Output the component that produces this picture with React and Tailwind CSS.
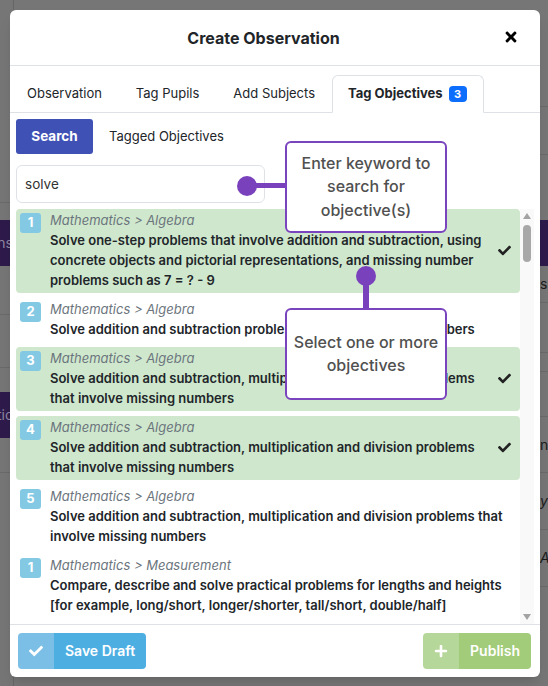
import { FaCheck, FaPlus, FaTimes } from 'react-icons/fa';

const objectives = [
  {
    num: 1,
    path: 'Mathematics > Algebra',
    text: 'Solve one-step problems that involve addition and subtraction, using concrete objects and pictorial representations, and missing number problems such as 7 = ? - 9',
    tagged: true,
  },
  {
    num: 2,
    path: 'Mathematics > Algebra',
    text: 'Solve addition and subtraction problems involving missing numbers',
    tagged: false,
  },
  {
    num: 3,
    path: 'Mathematics > Algebra',
    text: 'Solve addition and subtraction, multiplication and division problems that involve missing numbers',
    tagged: true,
  },
  {
    num: 4,
    path: 'Mathematics > Algebra',
    text: 'Solve addition and subtraction, multiplication and division problems that involve missing numbers',
    tagged: true,
  },
  {
    num: 5,
    path: 'Mathematics > Algebra',
    text: 'Solve addition and subtraction, multiplication and division problems that involve missing numbers',
    tagged: false,
  },
  {
    num: 1,
    path: 'Mathematics > Measurement',
    text: 'Compare, describe and solve practical problems for lengths and heights [for example, long/short, longer/shorter, tall/short, double/half]',
    tagged: false,
  },
  {
    num: 2,
    path: 'Mathematics > Measurement',
    text: 'Measure and begin to record lengths and heights, mass, capacity and volume, and time',
    tagged: false,
  },
];

const tabs = ['Observation', 'Tag Pupils', 'Add Subjects'];

function Backdrop() {
  return (
    <div className="flex h-full w-full text-sm text-[#1c1c1c]">
      <div className="flex w-[14px] flex-col overflow-hidden border-r border-[#666]">
        <div className="h-[203px] border-b border-[#6a6a6a]" />
        <div className="h-[17px]" />
        <div className="flex h-[46px] items-center justify-end whitespace-nowrap bg-[#2e1b4c] text-[#8f86a0]">
          Observations
        </div>
        <div className="h-[49px] border-b border-[#6a6a6a]" />
        <div className="h-[53px] border-b border-[#6a6a6a]" />
        <div className="h-[24px]" />
        <div className="flex h-[46px] items-center justify-end whitespace-nowrap bg-[#2e1b4c] text-[#8f86a0]">
          Statistic
        </div>
        <div className="h-[35px] border-b border-[#6a6a6a]" />
        <div className="flex-1" />
      </div>
      <div className="flex-1" />
      <div className="flex w-[14px] flex-col overflow-hidden">
        <div className="h-[107px] border-b border-[#6a6a6a]" />
        <div className="h-[48px] border-b border-[#6a6a6a]" />
        <div className="h-[65px]" />
        <div className="h-[46px] bg-[#2e1b4c]" />
        <div className="flex h-[37px] items-center border-b border-[#6a6a6a] pl-[6px]">s</div>
        <div className="h-[50px] border-b border-[#6a6a6a]" />
        <div className="h-[19px] border-b border-[#6a6a6a]" />
        <div className="h-[45px] border-b border-[#6a6a6a]" />
        <div className="flex h-[56px] items-center border-b border-[#6a6a6a] pl-[6px]">n</div>
        <div className="flex h-[57px] items-center border-b border-[#6a6a6a] pl-[6px] italic">y</div>
        <div className="flex h-[57px] items-center border-b border-[#6a6a6a] pl-[6px] italic">A</div>
        <div className="flex-1" />
      </div>
    </div>
  );
}

function ObjectiveRow({ item }) {
  return (
    <div
      className={`flex shrink-0 rounded pl-1 pt-[1px] pb-[3px] ${
        item.tagged ? 'bg-[#cfe8cd]' : 'bg-white pr-[6px]'
      }`}
    >
      <span className="mt-[3px] flex h-5 w-[21px] shrink-0 items-center justify-center rounded-[3px] bg-[#84c9e4] text-[13px] font-bold text-white">
        {item.num}
      </span>
      <div className="ml-[9px] min-w-0 flex-1 text-[13px] leading-5">
        <div className="italic text-[#6c757d]">{item.path}</div>
        <div className="font-semibold text-[#212529]">{item.text}</div>
      </div>
      {item.tagged && (
        <div className="flex w-[30px] shrink-0 items-center justify-center pr-[2px] text-[#222]">
          <FaCheck size={13} />
        </div>
      )}
    </div>
  );
}

function Callout({ className, children }) {
  return (
    <div
      className={`absolute flex h-[92px] w-[162px] items-center justify-center rounded-md border-2 border-[#7b44bf] bg-white text-center text-base font-medium leading-[23.5px] text-[#505050] ${className}`}
    >
      {children}
    </div>
  );
}

export default function App() {
  return (
    <div className="relative h-[686px] w-[548px] overflow-hidden bg-[#767676] font-['Inter',sans-serif]">
      <Backdrop />

      <div className="absolute left-[10px] top-[10px] flex h-[667px] w-[530px] flex-col overflow-hidden rounded-md bg-white shadow-lg">
        <div className="relative flex h-[56px] shrink-0 items-center justify-center border-b border-[#dee2e6] pr-[23px]">
          <h1 className="text-base font-bold text-[#212529]">Create Observation</h1>
          <button className="absolute right-[21px] top-[19px] text-black">
            <FaTimes size={16} />
          </button>
        </div>

        <div className="flex h-[47px] shrink-0 items-end border-b border-[#dee2e6] text-[13px] text-[#212529]">
          {tabs.map((tab) => (
            <div key={tab} className="flex h-[37px] items-center px-[17px]">
              {tab}
            </div>
          ))}
          <div className="-mb-px flex h-[38px] items-center gap-[6px] rounded-t-md border border-b-white border-[#dee2e6] bg-white pl-[15px] pr-[16px] font-bold">
            Tag Objectives
            <span className="flex h-4 w-[18px] items-center justify-center rounded bg-[#0d6efd] text-[11px] font-bold text-white">
              3
            </span>
          </div>
        </div>

        <div className="flex min-h-0 flex-1 flex-col px-1.5 pt-[6px]">
          <div className="flex shrink-0 items-center">
            <button className="h-[35px] w-[77px] rounded-[3px] bg-[#3f51b5] text-[13.5px] font-bold text-white">
              Search
            </button>
            <span className="px-4 text-[13px] text-[#212529]">Tagged Objectives</span>
          </div>

          <div className="mt-[11px] flex h-[38px] w-[249px] shrink-0 items-center rounded-md border border-[#dee2e6] px-2 text-[13.5px] text-[#333]">
            solve
          </div>

          <div className="mt-[6px] flex min-h-0 flex-1">
            <div className="flex min-w-0 flex-1 flex-col gap-[5px] overflow-hidden">
              {objectives.map((item, i) => (
                <ObjectiveRow key={i} item={item} />
              ))}
            </div>
            <div className="flex w-[14px] shrink-0 flex-col items-center bg-[#f9f9f9] pb-[4px] pt-[4px]">
              <span className="h-0 w-0 border-x-[4px] border-b-[6px] border-x-transparent border-b-[#a3a3a3]" />
              <span className="mt-[6px] h-[37px] w-[8px] rounded-full bg-[#a8a8a8]" />
              <span className="flex-1" />
              <span className="h-0 w-0 border-x-[4px] border-t-[6px] border-x-transparent border-t-[#a3a3a3]" />
            </div>
          </div>
        </div>

        <div className="flex h-[53px] shrink-0 items-center justify-between border-t border-[#dee2e6] pb-px pl-2 pr-[9px] text-sm font-semibold text-white">
          <button className="flex h-9 overflow-hidden rounded">
            <span className="flex w-9 items-center justify-center bg-[#7bbfe7]">
              <FaCheck size={14} />
            </span>
            <span className="flex items-center bg-[#4daee2] px-[11px]">Save Draft</span>
          </button>
          <button className="flex h-9 overflow-hidden rounded">
            <span className="flex w-9 items-center justify-center bg-[#b5d79a]">
              <FaPlus size={14} />
            </span>
            <span className="flex items-center bg-[#a2cb7a] px-[11px]">Publish</span>
          </button>
        </div>

        <span className="absolute left-[227px] top-[166px] h-5 w-5 rounded-full bg-[#7a41bd]" />
        <span className="absolute left-[237px] top-[173px] h-[5px] w-[40px] bg-[#7a41bd]" />
        <Callout className="left-[275px] top-[131px]">
          Enter keyword to
          <br />
          search for
          <br />
          objective(s)
        </Callout>

        <span className="absolute left-[346px] top-[256px] h-5 w-5 rounded-full bg-[#7a41bd]" />
        <span className="absolute left-[353px] top-[266px] h-[34px] w-[6px] bg-[#7a41bd]" />
        <Callout className="left-[275px] top-[298px]">
          Select one or more
          <br />
          objectives
        </Callout>
      </div>
    </div>
  );
}
